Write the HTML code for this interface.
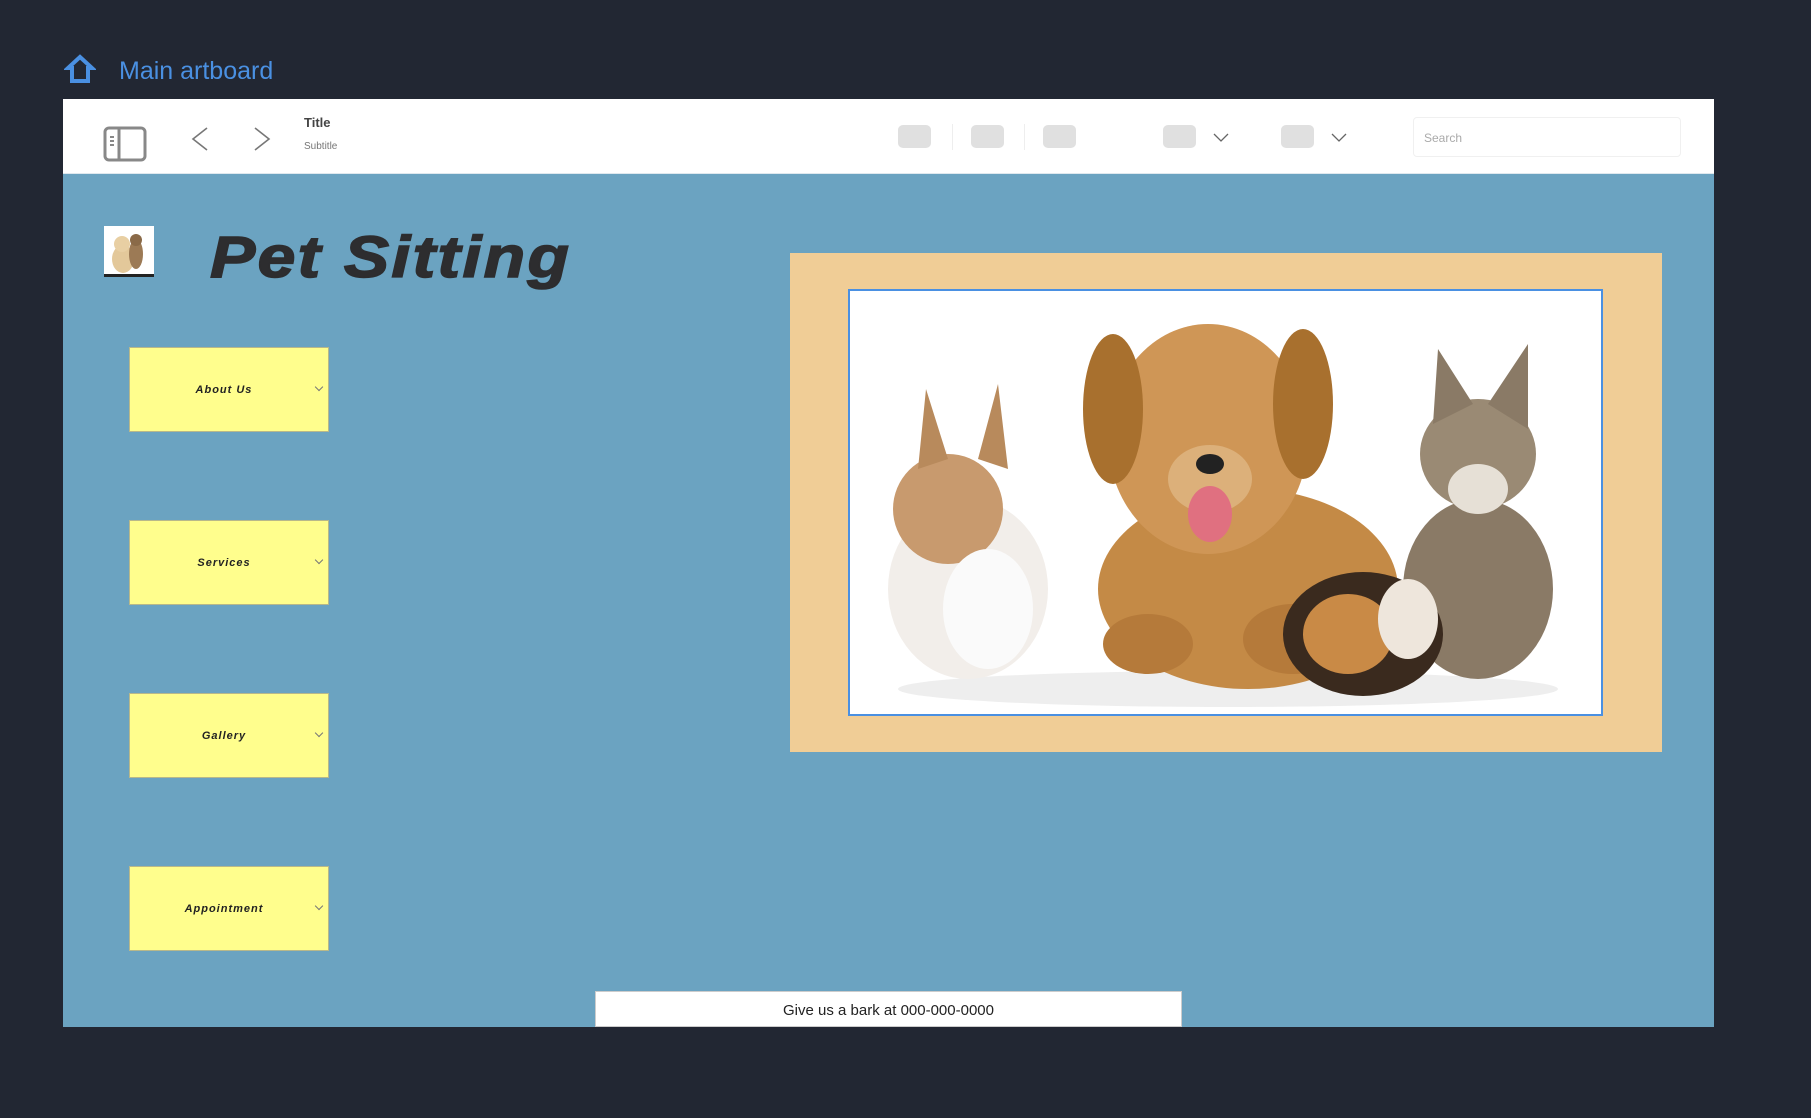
<!DOCTYPE html>
<html><head><meta charset="utf-8"><style>
*{margin:0;padding:0;box-sizing:border-box}
body{width:1811px;height:1118px;background:#222733;position:relative;overflow:hidden;font-family:"Liberation Sans",sans-serif}
.abs{position:absolute}
.hdr{left:119px;top:57px;font-size:25px;color:#4a90e2}
.art{left:63px;top:99px;width:1651px;height:928px;background:#6ba3c1}
.tb{left:63px;top:99px;width:1651px;height:75px;background:#fff;border-bottom:1px solid #dfe8ee}
.gb{background:#e0e0e0;border-radius:5px;width:33px;height:23px;top:125px}
.sep{width:1px;height:26px;background:#eee;top:124px}
.btn{left:129px;width:200px;height:85px;background:#fffe8d;border:1px solid #b8b88a;font-weight:bold;font-style:italic;font-size:11px;letter-spacing:1px;color:#222;display:flex;align-items:center;justify-content:center;padding-right:10px}
.btn span.c{position:absolute;right:6px;top:36px;width:6px;height:6px;border-right:1.5px solid #777;border-bottom:1.5px solid #777;transform:rotate(45deg)}
</style></head><body>
<svg class="abs" style="left:64px;top:54px" width="32" height="30" viewBox="0 0 32 30"><path d="M16 3 L4 14 H8 V27 H24 V14 H28 Z" fill="none" stroke="#4a90e2" stroke-width="4" stroke-linejoin="miter"/></svg>
<div class="abs hdr">Main artboard</div>
<div class="abs art"></div>
<div class="abs tb"></div>
<svg class="abs" style="left:103px;top:126px" width="44" height="36" viewBox="0 0 44 36"><rect x="2" y="2" width="40" height="32" rx="4" fill="none" stroke="#888" stroke-width="3"/><line x1="16" y1="2" x2="16" y2="34" stroke="#888" stroke-width="3"/><line x1="7" y1="11" x2="11" y2="11" stroke="#888" stroke-width="2"/><line x1="7" y1="15" x2="11" y2="15" stroke="#888" stroke-width="2"/><line x1="7" y1="19" x2="11" y2="19" stroke="#888" stroke-width="2"/></svg>
<svg class="abs" style="left:190px;top:126px" width="20" height="26"><path d="M17 2 L3 13 L17 24" fill="none" stroke="#777" stroke-width="1.6"/></svg>
<svg class="abs" style="left:252px;top:126px" width="20" height="26"><path d="M3 2 L17 13 L3 24" fill="none" stroke="#777" stroke-width="1.6"/></svg>
<div class="abs" style="left:304px;top:115px;font-size:13px;font-weight:bold;color:#444">Title</div>
<div class="abs" style="left:304px;top:141px;font-size:10px;color:#777">Subtitle</div>
<div class="abs gb" style="left:898px"></div>
<div class="abs sep" style="left:952px"></div>
<div class="abs gb" style="left:971px"></div>
<div class="abs sep" style="left:1024px"></div>
<div class="abs gb" style="left:1043px"></div>
<div class="abs gb" style="left:1163px"></div>
<svg class="abs" style="left:1213px;top:133px" width="16" height="10"><path d="M1 1 L8 8 L15 1" fill="none" stroke="#666" stroke-width="1.3"/></svg>
<div class="abs gb" style="left:1281px"></div>
<svg class="abs" style="left:1331px;top:133px" width="16" height="10"><path d="M1 1 L8 8 L15 1" fill="none" stroke="#666" stroke-width="1.3"/></svg>
<div class="abs" style="left:1413px;top:117px;width:268px;height:40px;border:1px solid #f0f0f0;border-radius:4px;font-size:12px;color:#aaa;padding:13px 0 0 10px">Search</div>

<svg class="abs" style="left:104px;top:226px" width="50" height="51"><rect width="50" height="51" fill="#fff"/><ellipse cx="19" cy="33" rx="11" ry="14" fill="#e3c89a"/><circle cx="18" cy="18" r="8" fill="#e8cfa3"/><ellipse cx="32" cy="28" rx="7" ry="15" fill="#9c7a55"/><circle cx="32" cy="14" r="6" fill="#8a6a48"/><rect y="48" width="50" height="3" fill="#222"/></svg>
<div class="abs" style="left:210px;top:224px;font-size:58px;font-weight:bold;font-style:italic;color:#2d2d2f;letter-spacing:2px;transform:scaleX(1.17);transform-origin:left;-webkit-text-stroke:1.5px #2d2d2f">Pet Sitting</div>

<div class="abs btn" style="top:347px">About Us<span class="c"></span></div>
<div class="abs btn" style="top:520px">Services<span class="c"></span></div>
<div class="abs btn" style="top:693px">Gallery<span class="c"></span></div>
<div class="abs btn" style="top:866px">Appointment<span class="c"></span></div>

<div class="abs" style="left:790px;top:253px;width:872px;height:499px;background:#f0cd96"></div>
<svg class="abs" style="left:848px;top:289px" width="755" height="427" viewBox="0 0 755 427">
<rect x="1" y="1" width="753" height="425" fill="#fff" stroke="#4a90e2" stroke-width="2"/>
<ellipse cx="380" cy="400" rx="330" ry="18" fill="#eee"/>
<ellipse cx="120" cy="300" rx="80" ry="90" fill="#f2eeea"/>
<ellipse cx="100" cy="220" rx="55" ry="55" fill="#c89a6e"/>
<path d="M70 180 L78 100 L100 170 Z M130 170 L150 95 L160 180 Z" fill="#b88a5c"/>
<ellipse cx="140" cy="320" rx="45" ry="60" fill="#fafafa"/>
<ellipse cx="400" cy="300" rx="150" ry="100" fill="#c48a46"/>
<ellipse cx="360" cy="150" rx="100" ry="115" fill="#cf9656"/>
<ellipse cx="265" cy="120" rx="30" ry="75" fill="#a8702e"/>
<ellipse cx="455" cy="115" rx="30" ry="75" fill="#a8702e"/>
<ellipse cx="362" cy="190" rx="42" ry="34" fill="#dcb07a"/>
<ellipse cx="362" cy="175" rx="14" ry="10" fill="#222"/>
<ellipse cx="362" cy="225" rx="22" ry="28" fill="#e07080"/>
<ellipse cx="300" cy="355" rx="45" ry="30" fill="#b57a3a"/>
<ellipse cx="445" cy="350" rx="50" ry="35" fill="#b57a3a"/>
<ellipse cx="630" cy="300" rx="75" ry="90" fill="#8a7a66"/>
<ellipse cx="630" cy="165" rx="58" ry="55" fill="#9a8a74"/>
<path d="M585 135 L590 60 L625 115 Z M640 115 L680 55 L680 140 Z" fill="#8a7a66"/>
<ellipse cx="630" cy="200" rx="30" ry="25" fill="#e6e0d6"/>
<ellipse cx="515" cy="345" rx="80" ry="62" fill="#3a2a1e"/>
<ellipse cx="500" cy="345" rx="45" ry="40" fill="#c98a46"/>
<ellipse cx="560" cy="330" rx="30" ry="40" fill="#eee6dc"/>
</svg>

<div class="abs" style="left:595px;top:991px;width:587px;height:36px;background:#fff;border:1px solid #ccc;font-size:15px;color:#222;text-align:center;line-height:38px">Give us a bark at 000-000-0000</div>
</body></html>
